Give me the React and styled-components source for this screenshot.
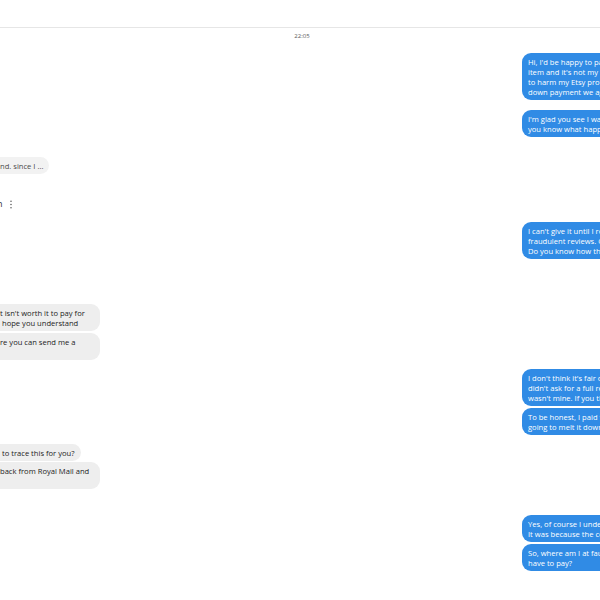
import React from 'react';
import styled, { createGlobalStyle } from 'styled-components';

const GlobalStyle = createGlobalStyle`
  *, *::before, *::after {
    box-sizing: border-box;
  }
  html, body {
    margin: 0;
    padding: 0;
    width: 600px;
    height: 600px;
    overflow: hidden;
    background: #ffffff;
    font-family: "Open Sans", "Noto Sans", sans-serif;
  }
`;

const messages = [
  { id: 1, from: 'me', gap: 13, lines: ["Hi, I'd be happy to pay for the", "item and it's not my fault it", 'to harm my Etsy profile', 'down payment we agreed'] },
  { id: 2, from: 'me', gap: 10, lines: ["I'm glad you see I was", 'you know what happened'] },
  { id: 3, from: 'reply', gap: 20, lines: ['nd. since I ...'] },
  { id: 4, from: 'meta', gap: 25 },
  { id: 5, from: 'me', gap: 13, lines: ["I can't give it until I receive", 'fraudulent reviews. Or', 'Do you know how that'] },
  { id: 6, from: 'them', gap: 45, wide: true, lines: ["t isn't worth it to pay for", ' hope you understand'] },
  { id: 7, from: 'them', gap: 2, wide: true, lines: ['re you can send me a', '\u00a0'] },
  { id: 8, from: 'me', gap: 9, lines: ["I don't think it's fair of", "didn't ask for a full refund", "wasn't mine. If you think"] },
  { id: 9, from: 'me', gap: 2, lines: ['To be honest, I paid for', 'going to melt it down'] },
  { id: 10, from: 'them', gap: 9, lines: [' to trace this for you?'] },
  { id: 11, from: 'them', gap: 1, wide: true, lines: ['back from Royal Mail and', '\u00a0'] },
  { id: 12, from: 'me', gap: 26, lines: ['Yes, of course I understand', 'It was because the courier'] },
  { id: 13, from: 'me', gap: 2, lines: ['So, where am I at fault', 'have to pay?'] },
];

export default function App() {
  return (
    <>
      <GlobalStyle />
      <Page>
        <Header />
        <Thread>
          <Stamp>22:05</Stamp>
          {messages.map((m) => {
            if (m.from === 'meta') {
              return (
                <MetaRow key={m.id} $gap={m.gap}>
                  <MetaText>n</MetaText>
                  <Kebab width="4" height="9" viewBox="0 0 4 9">
                    <circle cx="2" cy="1.2" r="0.75" />
                    <circle cx="2" cy="4.5" r="0.75" />
                    <circle cx="2" cy="7.8" r="0.75" />
                  </Kebab>
                </MetaRow>
              );
            }
            if (m.from === 'me') {
              return (
                <OutRow key={m.id} $gap={m.gap}>
                  <OutBubble>
                    {m.lines.map((l, i) => (
                      <Line key={i}>{l}</Line>
                    ))}
                  </OutBubble>
                </OutRow>
              );
            }
            return (
              <InRow key={m.id} $gap={m.gap}>
                <InBubble $wide={m.wide} $reply={m.from === 'reply'}>
                  {m.lines.map((l, i) => (
                    <Line key={i}>{l}</Line>
                  ))}
                </InBubble>
              </InRow>
            );
          })}
        </Thread>
      </Page>
    </>
  );
}

const Page = styled.div`
  display: flex;
  flex-direction: column;
  width: 600px;
  height: 600px;
  overflow: hidden;
`;

const Header = styled.div`
  height: 28px;
  border-bottom: 1px solid #e6e6e6;
  flex-shrink: 0;
`;

const Thread = styled.div`
  display: flex;
  flex-direction: column;
`;

const Stamp = styled.div`
  margin-top: 4px;
  text-align: center;
  font-size: 6px;
  line-height: 8px;
  color: #5a5a5a;
  padding-left: 4px;
`;

const OutRow = styled.div`
  display: flex;
  margin-top: ${(p) => p.$gap}px;
  padding-left: 522px;
`;

const OutBubble = styled.div`
  flex-shrink: 0;
  width: 200px;
  padding: 3.5px 6px;
  border-radius: 9px;
  background: #308be5;
  color: #ffffff;
  font-size: 7.6px;
  line-height: 10px;
`;

const InRow = styled.div`
  display: flex;
  margin-top: ${(p) => p.$gap}px;
`;

const InBubble = styled.div`
  margin-left: -14px;
  width: ${(p) => (p.$wide ? '114px' : 'auto')};
  padding: 3.5px 6px 3.5px 14px;
  border-radius: 9px;
  background: ${(p) => (p.$reply ? '#f2f2f2' : '#eeeeee')};
  color: ${(p) => (p.$reply ? '#4a4a4a' : '#1c1c1c')};
  font-size: 7.6px;
  line-height: 10px;
`;

const Line = styled.span`
  display: block;
  white-space: pre;
`;

const MetaRow = styled.div`
  display: flex;
  align-items: center;
  gap: 6px;
  height: 10px;
  margin-top: ${(p) => p.$gap}px;
`;

const MetaText = styled.span`
  margin-left: -3px;
  font-size: 9px;
  line-height: 10px;
  color: #333333;
`;

const Kebab = styled.svg`
  fill: #555555;
`;
